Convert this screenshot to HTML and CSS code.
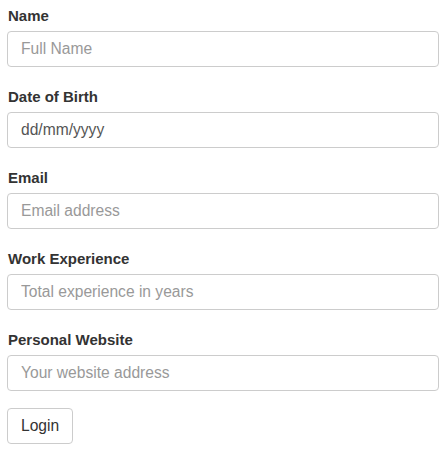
FILE: index.html
```html
<!DOCTYPE html>
<html>
<head>
<meta charset="utf-8">
<link rel="stylesheet" href="styles.css">
</head>
<body>
<form class="form">
  <div class="group">
    <label class="label" for="name">Name</label>
    <input class="control" id="name" type="text" placeholder="Full Name">
  </div>
  <div class="group">
    <label class="label" for="dob">Date of Birth</label>
    <input class="control control-value" id="dob" type="text" value="dd/mm/yyyy">
  </div>
  <div class="group">
    <label class="label" for="email">Email</label>
    <input class="control" id="email" type="text" placeholder="Email address">
  </div>
  <div class="group">
    <label class="label" for="exp">Work Experience</label>
    <input class="control" id="exp" type="text" placeholder="Total experience in years">
  </div>
  <div class="group group-last">
    <label class="label" for="web">Personal Website</label>
    <input class="control" id="web" type="text" placeholder="Your website address">
  </div>
  <button class="btn" type="button">Login</button>
</form>
</body>
</html>
```
FILE: styles.css
```css
html, body {
  margin: 0;
  padding: 0;
  background: #fff;
}
body {
  font-family: "Liberation Sans", Arial, Helvetica, sans-serif;
  color: #333;
  padding: 6px 8px 0 7px;
}
.form {
  display: flex;
  flex-direction: column;
  align-items: flex-start;
}
.group {
  display: flex;
  flex-direction: column;
  width: 100%;
  margin-bottom: 20px;
}
.group-last {
  margin-bottom: 17px;
}
.label {
  display: block;
  font-weight: bold;
  font-size: 15px;
  line-height: 20px;
  margin: 0 0 5px 1px;
  color: #333;
}
.control {
  box-sizing: border-box;
  width: 100%;
  height: 36px;
  padding: 6px 13px;
  font-family: inherit;
  font-size: 15.6px;
  color: #555;
  background: #fff;
  border: 1px solid #ccc;
  border-radius: 4px;
  outline: none;
}
.control::placeholder {
  color: #999;
  opacity: 1;
}
.control-value {
  color: #555;
}
.btn {
  box-sizing: border-box;
  height: 36px;
  padding: 6px 13px;
  font-family: inherit;
  font-size: 15.6px;
  color: #333;
  background: #fff;
  border: 1px solid #ccc;
  border-radius: 4px;
  cursor: pointer;
}
```
